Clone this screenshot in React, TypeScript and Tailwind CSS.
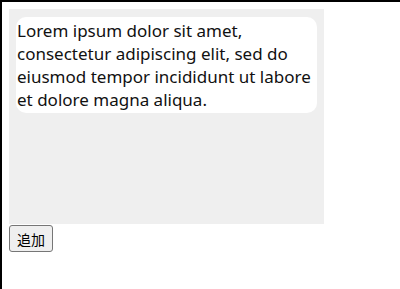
import React from 'react';

export default function App() {
  return (
    <div className="h-[289px] w-[400px] border-l-2 border-t-2 border-black bg-white pl-[7px] pt-[7px] font-['Noto_Sans','Noto_Sans_CJK_JP',sans-serif]">
      <div className="h-[215px] w-[315px] bg-[#efefef] px-[7px] pt-[8px]">
        <div className="rounded-[10px] bg-white px-[1px] py-[2px] text-[17px] leading-[23px] text-[#111]">
          Lorem ipsum dolor sit amet, consectetur adipiscing elit, sed do eiusmod tempor incididunt ut labore et dolore magna aliqua.
        </div>
      </div>
      <button className="mt-px h-[27px] rounded-[3px] border border-[#767676] bg-[#efefef] px-[7px] font-['Noto_Sans_CJK_JP',sans-serif] text-[14px] leading-none text-black">
        追加
      </button>
    </div>
  );
}
